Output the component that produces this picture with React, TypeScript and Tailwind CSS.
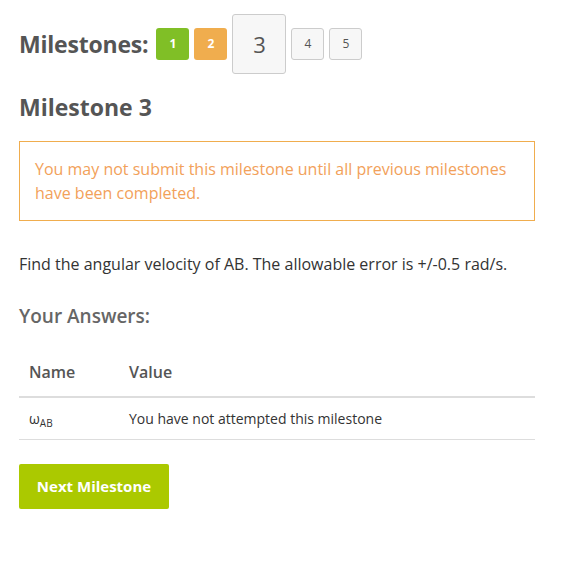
import React from "react";

const font = { fontFamily: '"Open Sans", "Noto Sans", sans-serif' };

const Badge = ({ n, kind }: { n: number; kind: "done" | "warn" | "current" | "todo" }) => {
  if (kind === "current") {
    return (
      <div className="flex h-[60px] w-[54px] items-center justify-center rounded-[3px] border border-[#cccccc] bg-[#f7f7f7] text-[22px] text-[#555555]">
        {n}
      </div>
    );
  }
  const cls =
    kind === "done"
      ? "bg-[#80bf26] text-white font-bold"
      : kind === "warn"
      ? "bg-[#f0ad4e] text-white font-bold"
      : "border border-[#cccccc] bg-[#f7f7f7] text-[#555555]";
  return (
    <div className={`flex h-[32px] w-[33px] items-center justify-center rounded-[3px] text-[12px] ${cls}`}>
      {n}
    </div>
  );
};

export default function App() {
  return (
    <div className="h-[567px] w-[563px] bg-white pl-[19px] pr-[28px]" style={font}>
      <div className="flex items-center gap-[5px] pt-[14px]">
        <h1 className="mr-[3px] text-[23px] font-bold tracking-[-0.2px] text-[#555555]">Milestones:</h1>
        <Badge n={1} kind="done" />
        <Badge n={2} kind="warn" />
        <Badge n={3} kind="current" />
        <Badge n={4} kind="todo" />
        <Badge n={5} kind="todo" />
      </div>

      <h2 className="mt-[18px] text-[23px] font-bold leading-[30px] text-[#555555]">Milestone 3</h2>

      <div className="mt-[19px] border border-[#f0ad4e] p-[15px] text-[16px] leading-[24px] text-[#f2a15a]">
        You may not submit this milestone until all previous milestones have been completed.
      </div>

      <p className="mt-[31px] text-[16px] leading-[24px] text-[#333333]">
        Find the angular velocity of AB. The allowable error is +/-0.5 rad/s.
      </p>

      <h3 className="mt-[26px] text-[19px] font-semibold leading-[28px] text-[#666666]">Your Answers:</h3>

      <table className="mt-[22px] w-full table-fixed text-left">
        <thead>
          <tr className="border-b-2 border-[#dddddd]">
            <th className="w-[100px] px-[10px] pb-[12px] pt-[8px] text-[16px] font-semibold text-[#555555]">
              Name
            </th>
            <th className="px-[10px] pb-[12px] pt-[8px] text-[16px] font-semibold text-[#555555]">Value</th>
          </tr>
        </thead>
        <tbody>
          <tr className="border-b border-[#dddddd]">
            <td className="px-[10px] py-[10px] text-[14px] text-[#333333]">
              ω<sub className="text-[10px]">AB</sub>
            </td>
            <td className="px-[10px] py-[10px] text-[14px] text-[#333333]">
              You have not attempted this milestone
            </td>
          </tr>
        </tbody>
      </table>

      <button className="mt-[24px] h-[45px] w-[150px] rounded-[2px] bg-[#abc900] text-[15px] font-bold text-white">
        Next Milestone
      </button>
    </div>
  );
}
